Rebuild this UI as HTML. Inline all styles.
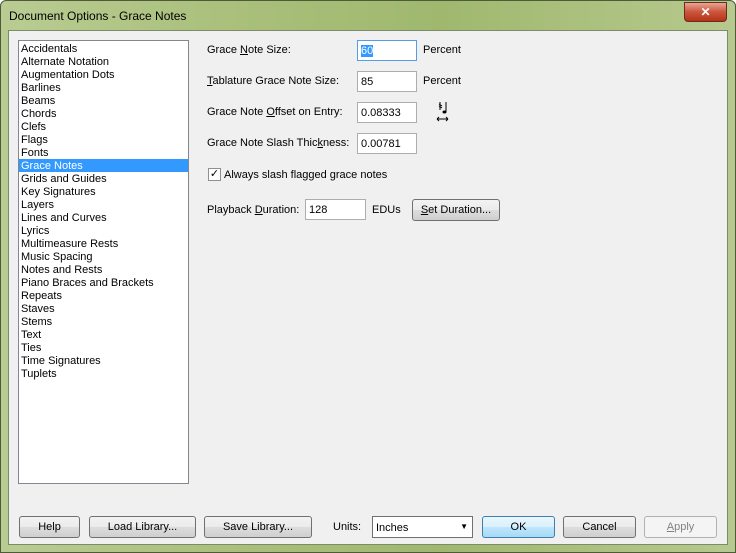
<!DOCTYPE html>
<html><head><style>
*{margin:0;padding:0;box-sizing:border-box}
body{width:736px;height:553px;overflow:hidden;font-family:"Liberation Sans",sans-serif;font-size:11px;color:#000;background:#fff}
.win{position:absolute;left:0;top:0;width:736px;height:553px;background:linear-gradient(90deg,#b9cc93 0%,#aac07c 30%,#9fb86e 60%,#b7c98e 100%);border:1px solid #4e5a3a;border-radius:6px 6px 0 0}
.title{position:absolute;left:8px;top:8px;font-size:12px;color:#000}
.close{position:absolute;left:683px;top:1px;width:43px;height:20px;border:1px solid #6a2b20;border-radius:0 0 4px 4px;background:linear-gradient(#e9a594,#c9553c 50%,#b63218);color:#fff;font-weight:bold;text-align:center;line-height:18px;font-size:12px}
.client{position:absolute;left:8px;top:30px;width:720px;height:515px;background:#f0f0f0;border:1px solid #7f8a6a}
.a{position:absolute;white-space:nowrap}
.list{position:absolute;left:18px;top:40px;width:171px;height:444px;background:#fff;border:1px solid #828790;padding-top:1px}
.list div{height:13px;line-height:14px;padding-left:2px}
.sel{background:#3399ff;color:#fff}
.in{position:absolute;height:21px;background:#fff;border:1px solid #abadb3;padding:4px 0 0 3px}
.btn{position:absolute;height:22px;border:1px solid #707070;border-radius:3px;background:linear-gradient(#f2f2f2,#ebebeb 50%,#dddddd 51%,#cfcfcf);text-align:center;line-height:21px}
u{text-decoration:underline}
</style></head><body>
<div class="win">
<div class="title">Document Options - Grace Notes</div>
<div class="close">✕</div>
</div>
<div class="client"></div>
<div class="list">
<div>Accidentals</div><div>Alternate Notation</div><div>Augmentation Dots</div><div>Barlines</div><div>Beams</div><div>Chords</div><div>Clefs</div><div>Flags</div><div>Fonts</div><div class="sel">Grace Notes</div><div>Grids and Guides</div><div>Key Signatures</div><div>Layers</div><div>Lines and Curves</div><div>Lyrics</div><div>Multimeasure Rests</div><div>Music Spacing</div><div>Notes and Rests</div><div>Piano Braces and Brackets</div><div>Repeats</div><div>Staves</div><div>Stems</div><div>Text</div><div>Ties</div><div>Time Signatures</div><div>Tuplets</div>
</div>
<div class="a" style="left:207px;top:44px">Grace <u>N</u>ote Size:</div>
<div class="in" style="left:357px;top:40px;width:60px;border-color:#569de5"><span style="background:#3399ff;color:#fff">60</span></div>
<div class="a" style="left:423px;top:44px">Percent</div>
<div class="a" style="left:207px;top:75px"><u>T</u>ablature Grace Note Size:</div>
<div class="in" style="left:357px;top:71px;width:60px">85</div>
<div class="a" style="left:423px;top:75px">Percent</div>
<div class="a" style="left:207px;top:106px">Grace Note <u>O</u>ffset on Entry:</div>
<div class="in" style="left:357px;top:102px;width:60px">0.08333</div>
<svg class="a" style="left:436px;top:100px" width="14" height="24"><path d="M4 2v8M3 4l3 2M3 6l3 2M10 2v10" stroke="#000" fill="none"/><ellipse cx="8.5" cy="12" rx="2" ry="1.5" fill="#000"/><path d="M1 19h11M1 19l2-2M1 19l2 2M12 19l-2-2M12 19l-2 2" stroke="#000" fill="none"/></svg>
<div class="a" style="left:207px;top:137px">Grace Note Slash Thic<u>k</u>ness:</div>
<div class="in" style="left:357px;top:133px;width:60px">0.00781</div>
<div class="a" style="left:208px;top:168px;width:13px;height:13px;border:1px solid #8f8f8f;background:#fff;font-size:11px;line-height:11px;text-align:center">✓</div>
<div class="a" style="left:224px;top:169px">Always slash flagged grace notes</div>
<div class="a" style="left:207px;top:204px">Playback <u>D</u>uration:</div>
<div class="in" style="left:305px;top:199px;width:61px">128</div>
<div class="a" style="left:372px;top:204px">EDUs</div>
<div class="btn" style="left:412px;top:199px;width:88px"><u>S</u>et Duration...</div>
<div class="btn" style="left:19px;top:516px;width:61px">Help</div>
<div class="btn" style="left:89px;top:516px;width:107px">Load Library...</div>
<div class="btn" style="left:204px;top:516px;width:108px">Save Library...</div>
<div class="a" style="left:333px;top:521px">Units:</div>
<div class="in" style="left:372px;top:516px;width:101px;height:22px;border-color:#707070;padding-top:5px">Inches<span style="position:absolute;right:4px;top:5px;font-size:8px">▼</span></div>
<div class="btn" style="left:482px;top:516px;width:73px;border-color:#3c7fb1;background:linear-gradient(#eaf6fd,#d9f0fc 50%,#bee6fd 51%,#a7d9f5)">OK</div>
<div class="btn" style="left:563px;top:516px;width:73px">Cancel</div>
<div class="btn" style="left:644px;top:516px;width:73px;border-color:#adb2b5;background:#f4f4f4;color:#838383"><u>A</u>pply</div>
</body></html>
